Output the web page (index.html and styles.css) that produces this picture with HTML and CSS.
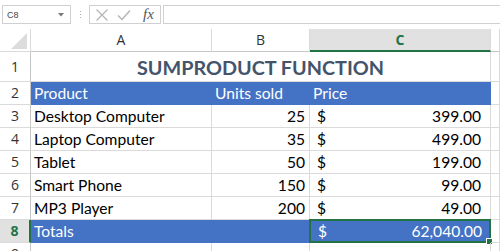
FILE: index.html
```html
<!DOCTYPE html>
<html>
<head>
<meta charset="utf-8">
<link rel="stylesheet" href="styles.css">
</head>
<body>
<div class="app">
  <div class="toolbar">
    <div class="namebox">
      <span class="ref">C8</span>
      <svg class="caret" width="6" height="4" viewBox="0 0 6 4"><path d="M0 0H6L3 3.5Z" fill="#777"/></svg>
    </div>
    <div class="grip"><i></i><i></i><i></i></div>
    <div class="fxbox">
      <svg class="ico" width="14" height="14" viewBox="0 0 14 14"><path d="M1.5 1.5L12.5 12.5M12.5 1.5L1.5 12.5" stroke="#b4b4b4" stroke-width="1.2" fill="none"/></svg>
      <svg class="ico" width="14" height="14" viewBox="0 0 14 14"><path d="M1 7.5L5 11.5L13 2.5" stroke="#b4b4b4" stroke-width="1.4" fill="none"/></svg>
      <span class="fx">fx</span>
    </div>
    <div class="formula"></div>
  </div>
  <div class="sheet">
    <div class="corner"><svg width="20" height="20" viewBox="0 0 20 20"><path d="M19 3V19H3Z" fill="#dcdcdc"/></svg></div>
    <div class="colhead">A</div>
    <div class="colhead">B</div>
    <div class="colhead sel">C</div>
    <div class="colhead last"></div>

    <div class="rowhead r1">1</div>
    <div class="cell title r1">SUMPRODUCT FUNCTION</div>
    <div class="cell last r1"></div>

    <div class="rowhead">2</div>
    <div class="cell blue">Product</div>
    <div class="cell blue">Units sold</div>
    <div class="cell blue">Price</div>
    <div class="cell last"></div>

    <div class="rowhead">3</div>
    <div class="cell">Desktop Computer</div>
    <div class="cell num">25</div>
    <div class="cell money"><span>$</span><span>399.00</span></div>
    <div class="cell last"></div>

    <div class="rowhead">4</div>
    <div class="cell">Laptop Computer</div>
    <div class="cell num">35</div>
    <div class="cell money"><span>$</span><span>499.00</span></div>
    <div class="cell last"></div>

    <div class="rowhead">5</div>
    <div class="cell">Tablet</div>
    <div class="cell num">50</div>
    <div class="cell money"><span>$</span><span>199.00</span></div>
    <div class="cell last"></div>

    <div class="rowhead">6</div>
    <div class="cell">Smart Phone</div>
    <div class="cell num">150</div>
    <div class="cell money"><span>$</span><span>99.00</span></div>
    <div class="cell last"></div>

    <div class="rowhead">7</div>
    <div class="cell">MP3 Player</div>
    <div class="cell num">200</div>
    <div class="cell money"><span>$</span><span>49.00</span></div>
    <div class="cell last"></div>

    <div class="rowhead sel">8</div>
    <div class="cell blue">Totals</div>
    <div class="cell blue"></div>
    <div class="cell blue money active"><span>$</span><span>62,040.00</span><b class="handle"></b></div>
    <div class="cell last"></div>

    <div class="rowhead">9</div>
    <div class="cell"></div>
    <div class="cell"></div>
    <div class="cell"></div>
    <div class="cell last"></div>
  </div>
</div>
</body>
</html>
```

FILE: styles.css
```css
html, body {
  margin: 0;
  padding: 0;
  background: #ffffff;
  overflow: hidden;
}
.app {
  width: 500px;
  height: 251px;
  overflow: hidden;
  font-family: "Lato", "Liberation Sans", sans-serif;
  color: #000;
}
.toolbar {
  height: 29px;
  display: flex;
  align-items: flex-start;
  padding: 5px 0 0 2px;
  box-sizing: border-box;
  background: #fff;
}
.namebox {
  width: 69px;
  height: 19px;
  box-sizing: border-box;
  border: 1px solid #d0d0d0;
  display: flex;
  align-items: center;
  justify-content: space-between;
  padding: 0 6px 0 4px;
}
.ref {
  font-family: "Liberation Sans", sans-serif;
  font-size: 9px;
  color: #444;
}
.grip {
  width: 18px;
  height: 19px;
  display: flex;
  flex-direction: column;
  align-items: center;
  justify-content: center;
  gap: 2px;
}
.grip i {
  display: block;
  width: 1px;
  height: 1px;
  background: #b0b0b0;
}
.fxbox {
  width: 72px;
  height: 19px;
  box-sizing: border-box;
  border: 1px solid #d0d0d0;
  display: flex;
  align-items: center;
  padding-left: 5px;
  gap: 8px;
}
.fx {
  font-family: "Liberation Serif", serif;
  font-style: italic;
  font-size: 15px;
  color: #555;
  margin-left: 4px;
  line-height: 1;
}
.formula {
  flex: 1;
  height: 19px;
  box-sizing: border-box;
  border: 1px solid #d0d0d0;
  border-right: none;
  margin-left: 2px;
}
.sheet {
  display: grid;
  grid-template-columns: 31px 181px 98px 181px 9px;
  grid-template-rows: 23px 30px repeat(8, 23px);
}
.sheet > div {
  box-sizing: border-box;
  border-right: 1px solid #dadada;
  border-bottom: 1px solid #dadada;
  position: relative;
}
.corner {
  background: #fff;
  display: flex;
  align-items: flex-end;
  justify-content: flex-end;
  padding: 0 2px 1px 0;
}
.corner svg { display: block; }
.colhead {
  font-family: "Open Sans", "Liberation Sans", sans-serif;
  font-size: 14px;
  color: #333;
  text-align: center;
  line-height: 22px;
  background: #fff;
  border-bottom-color: #c6c6c6 !important;
}
.colhead.sel {
  background: #e1e1e1;
  color: #217346;
  font-weight: 700;
  border-bottom: 2px solid #217346 !important;
  line-height: 21px;
}
.rowhead {
  font-family: "Open Sans", "Liberation Sans", sans-serif;
  font-size: 14px;
  color: #333;
  text-align: center;
  line-height: 22px;
  border-right-color: #c6c6c6 !important;
}
.rowhead.r1 { line-height: 30px; }
.rowhead.sel {
  background: #e1e1e1;
  color: #217346;
  font-weight: 700;
  border-right: 2px solid #217346 !important;
}
.cell {
  font-size: 15.6px;
  line-height: 22px;
  padding: 0 3px;
  white-space: nowrap;
  overflow: visible;
}
.cell.last { padding: 0; }
.title {
  grid-column: 2 / 5;
  text-align: center;
  font-weight: 700;
  font-size: 19.8px;
  color: #44546a;
  line-height: 30px;
}
.blue {
  background: #4472c4;
  color: #fff;
  border-right-color: #4472c4 !important;
  border-bottom-color: #4472c4 !important;
}
.num { text-align: right; padding-right: 4px; }
.money {
  display: flex;
  justify-content: space-between;
  padding: 0 9px 0 7px;
}
.active {
  border: 2px solid #217346 !important;
  margin: -1px 0 0 -1px;
  padding: 0 7px 0 7px;
  line-height: 21px;
  width: calc(100% + 1px);
}
.handle {
  position: absolute;
  right: -4px;
  bottom: -4px;
  width: 5px;
  height: 5px;
  background: #217346;
  border: 1px solid #fff;
}
```
